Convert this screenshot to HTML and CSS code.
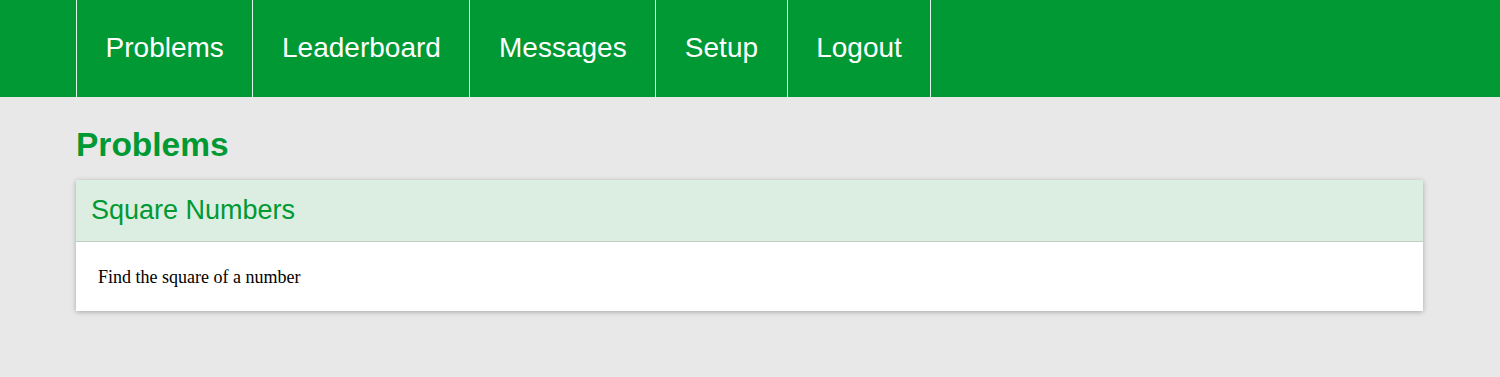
FILE: index.html
```html
<!DOCTYPE html>
<html>
<head>
<meta charset="utf-8">
<link rel="stylesheet" href="styles.css">
</head>
<body>
<nav class="topbar">
  <ul class="menu">
    <li><a href="#">Problems</a></li>
    <li><a href="#">Leaderboard</a></li>
    <li><a href="#">Messages</a></li>
    <li><a href="#">Setup</a></li>
    <li><a href="#">Logout</a></li>
  </ul>
</nav>
<main class="content">
  <h1 class="page-title">Problems</h1>
  <section class="card">
    <header class="card-head"><h2>Square Numbers</h2></header>
    <div class="card-body"><p>Find the square of a number</p></div>
  </section>
</main>
</body>
</html>
```

FILE: styles.css
```css
html, body {
  margin: 0;
  padding: 0;
  background: #e8e8e8;
  height: 100%;
}
body {
  font-family: "Liberation Sans", Arial, sans-serif;
}
.topbar {
  background: #009933;
  height: 97px;
  padding-left: 76px;
}
.menu {
  list-style: none;
  margin: 0;
  padding: 0;
  display: flex;
  height: 100%;
}
.menu li {
  border-left: 1px solid #e2f2e6;
  display: flex;
}
.menu li:last-child {
  border-right: 1px solid #e2f2e6;
}
.menu a {
  display: flex;
  align-items: center;
  padding: 0 28.6px 2px 28.6px;
  color: #ffffff;
  text-decoration: none;
  font-size: 28px;
}
.content {
  padding: 0 77px 0 76px;
}
.page-title {
  margin: 0;
  padding-top: 28px;
  height: 55px;
  color: #009933;
  font-size: 33.5px;
  font-weight: bold;
  line-height: 40px;
}
.card {
  background: #ffffff;
  box-shadow: 0 1px 5px rgba(0, 0, 0, 0.28);
}
.card-head {
  background: #dbeee1;
  border-bottom: 1px solid #bfcfc4;
  height: 61px;
  display: flex;
  align-items: center;
  padding-left: 15px;
}
.card-head h2 {
  margin: 0;
  font-weight: normal;
  font-size: 27px;
  color: #009933;
}
.card-body {
  height: 69px;
  padding-left: 22px;
  display: flex;
  align-items: center;
}
.card-body p {
  margin: 0;
  padding-top: 2px;
  font-family: "Liberation Serif", "Times New Roman", serif;
  font-size: 18px;
  color: #000;
}
```
